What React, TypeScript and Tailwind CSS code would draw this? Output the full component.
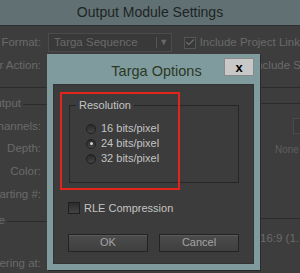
import { Check } from "lucide-react";

const font = { fontFamily: '"Liberation Sans", Arial, sans-serif' };

function BgLabel({ text, narrow }: { text: string; narrow?: "section" | "resize" }) {
  const width = narrow === "section" ? "w-[21px]" : narrow === "resize" ? "w-[5px]" : "w-[41px]";
  return (
    <div className={`flex ${width} shrink-0 justify-end whitespace-nowrap`}>
      {text}
    </div>
  );
}

function Radio({ checked, label }: { checked?: boolean; label: string }) {
  return (
    <div className="flex h-[15px] items-center gap-[5px]">
      <span className="flex h-[10px] w-[10px] items-center justify-center rounded-full border border-[#1f1f1f] bg-gradient-to-b from-[#2a2a2a] to-[#454545]">
        {checked && <span className="h-[3px] w-[3px] rounded-full bg-[#d0d0d0]" />}
      </span>
      <span>{label}</span>
    </div>
  );
}

function DlgButton({ label }: { label: string }) {
  return (
    <div className="flex h-[18px] w-[80px] items-center justify-center border border-[#232323] bg-gradient-to-b from-[#4c4c4c] to-[#3f3f3f] text-[#a4a4a4] shadow-[inset_0_1px_0_#5a5a5a]">
      {label}
    </div>
  );
}

export default function App() {
  return (
    <div className="relative h-[273px] w-[300px] overflow-hidden bg-[#3d3d3d] text-[11.5px] text-[#6a6a6a]" style={font}>
      {/* title bar of the parent window */}
      <div className="flex h-[26px] items-center justify-center border-b border-[#303030] bg-[#617173] text-[14px] text-[#1e2424]">
        Output Module Settings
      </div>

      {/* parent window content */}
      <div className="flex flex-col">
        <div className="mt-[7px] flex h-[19px] items-center">
          <BgLabel text="Format:" />
          <div className="ml-[7px] flex h-[19px] w-[177px] items-center border border-[#4b4b4b] bg-[#393939] pl-[5px]">
            <span className="flex-1">Targa Sequence</span>
            <span className="h-[11px] w-px bg-[#555]" />
            <span className="w-[14px] text-center text-[9px]">▼</span>
          </div>
          <span className="ml-[12px] flex h-[12px] w-[12px] items-center justify-center border border-[#555] bg-[#383838]">
            <Check size={11} strokeWidth={3} className="text-[#6e6e6e]" />
          </span>
          <span className="ml-[4px] whitespace-nowrap">Include Project Link</span>
        </div>

        <div className="mt-[5px] flex h-[17px] items-center">
          <BgLabel text="Post-Render Action:" />
          <span className="ml-[196px] h-[12px] w-[12px] shrink-0 border border-[#555] bg-[#383838]" />
          <span className="ml-[4px] whitespace-nowrap">Include Source XMP Metadata</span>
        </div>

        <div className="mt-[13px] h-px bg-[#2b2b2b]" />

        <div className="flex">
          <div className="w-[260px] shrink-0">
            <div className="mt-[9px] flex h-[14px] items-center">
              <BgLabel text="Video Output" narrow="section" />
              <span className="ml-[2px] h-px w-[30px] bg-[#2b2b2b]" />
            </div>
            <div className="mt-[9px] flex h-[14px] items-center"><BgLabel text="Channels:" /></div>
            <div className="mt-[8px] flex h-[14px] items-center"><BgLabel text="Depth:" /></div>
            <div className="mt-[9px] flex h-[14px] items-center"><BgLabel text="Color:" /></div>
            <div className="mt-[9px] flex h-[14px] items-center"><BgLabel text="Starting #:" /></div>
            <div className="mt-[12px] flex h-[14px] items-center">
              <BgLabel text="Resize" narrow="resize" />
              <span className="ml-[2px] h-px w-[40px] bg-[#2b2b2b]" />
            </div>
            <div className="mt-[29px] flex h-[14px] items-center"><BgLabel text="Rendering at:" /></div>
          </div>
          <div className="flex flex-1 flex-col">
            <div className="h-[16px] border-b border-[#2b2b2b]" />
            <div className="ml-[33px] mt-[14px] h-[16px] border border-[#4b4b4b] bg-[#393939]" />
            <div className="ml-[15px] mt-[9px] text-[10px] leading-[13px] text-[#5e5e5e]">None</div>
            <div className="mt-[62px] h-px bg-[#2b2b2b]" />
            <div className="mt-[11px] whitespace-nowrap">16:9 (1.78)</div>
          </div>
        </div>
      </div>

      {/* Targa Options dialog */}
      <div className="absolute left-[47px] top-[54px] flex h-[216px] w-[213px] flex-col bg-[#7f9b9e] shadow-[1px_1px_0_#2a2a2a]">
        <div className="relative flex h-[30px] items-center justify-center pl-[6px] pt-[6px] text-[14.5px] text-[#2c3824]">
          Targa Options
          <div className="absolute right-[6px] top-[4px] flex h-[18px] w-[30px] items-center justify-center border border-[#8a8a8a] bg-[#c8c8c8] text-[13px] font-bold leading-none text-black">
            x
          </div>
        </div>
        <div className="relative mx-[6px] mb-[6px] flex flex-1 flex-col border border-[#333] bg-[#3c3c3c] text-[11px] text-[#c4c4c4]">
          <fieldset className="ml-[15px] mt-[14px] h-[84px] w-[170px] border border-[#262626]">
            <legend className="ml-[6px] px-[3px] leading-[13px]">Resolution</legend>
            <div className="pl-[16px] pt-[9px]">
              <Radio label="16 bits/pixel" />
              <Radio checked label="24 bits/pixel" />
              <Radio label="32 bits/pixel" />
            </div>
          </fieldset>

          <div className="ml-[14px] mt-[17px] flex items-center gap-[4px]">
            <span className="h-[12px] w-[12px] border border-[#1f1f1f] bg-gradient-to-b from-[#2c2c2c] to-[#444]" />
            <span>RLE Compression</span>
          </div>

          <div className="ml-[14px] mt-[17px] flex gap-[11px]">
            <DlgButton label="OK" />
            <DlgButton label="Cancel" />
          </div>

          {/* red highlight around the resolution group */}
          <div className="absolute left-[6px] top-[7px] h-[98px] w-[120px] border-2 border-[#e3241b]" />
        </div>
      </div>
    </div>
  );
}
